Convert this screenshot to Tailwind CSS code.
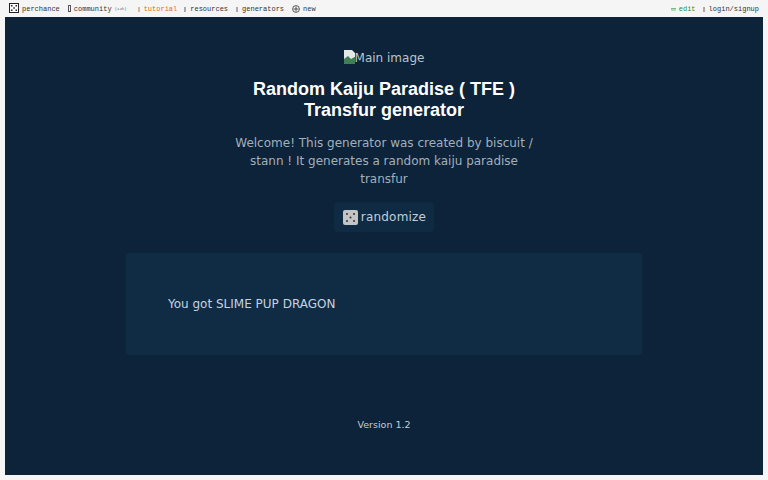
<!DOCTYPE html>
<html lang="en">
<head>
    <meta charset="UTF-8">
    <meta name="viewport" content="width=device-width, initial-scale=1.0">
    <title>Random Kaiju Paradise ( TFE ) Transfur generator</title>
    <script src="https://cdn.jsdelivr.net/npm/@tailwindcss/browser@4"></script>
</head>
<body class="bg-[#f5f5f5] h-[480px] w-[768px] overflow-hidden flex flex-col">
    <nav class="h-[17px] pt-[1px] flex items-center justify-between pl-[9px] pr-[9px] font-['Liberation_Mono',monospace] text-[7px] text-[#333]">
        <div class="flex items-center">
            <span class="flex items-center gap-[3px] mr-[8px]">
                <svg width="10" height="10" viewBox="0 0 10 10" class="mb-[2px]"><rect x="0.5" y="0.5" width="9" height="9" fill="#fff" stroke="#222"/><rect x="2" y="2" width="1.5" height="1.5" fill="#222"/><rect x="6.5" y="2" width="1.5" height="1.5" fill="#222"/><rect x="4.25" y="4.25" width="1.5" height="1.5" fill="#222"/><rect x="2" y="6.5" width="1.5" height="1.5" fill="#222"/><rect x="6.5" y="6.5" width="1.5" height="1.5" fill="#222"/></svg>
                perchance
            </span>
            <span class="flex items-center gap-[3px] mr-[11px]">
                <span class="w-[3px] h-[7px] border border-[#555] mb-[2px]"></span>
                community <span class="text-[4px] text-[#666]">(14h)</span>
            </span>
            <span class="flex items-center gap-[4px] mr-[7px] text-[#e07020]">
                <span class="w-[2px] h-[5px] border border-[#d9b89a]"></span>
                tutorial
            </span>
            <span class="flex items-center gap-[4px] mr-[8px]">
                <span class="w-[2px] h-[5px] border border-[#aaa]"></span>
                resources
            </span>
            <span class="flex items-center gap-[4px] mr-[8px]">
                <span class="w-[2px] h-[5px] border border-[#aaa]"></span>
                generators
            </span>
            <span class="flex items-center gap-[3px]">
                <svg width="8" height="8" viewBox="0 0 8 8" fill="none" stroke="#333" stroke-width="0.8"><circle cx="4" cy="4" r="3.4"/><path d="M4 1.5v5M1.5 4h5"/></svg>
                new
            </span>
        </div>
        <div class="flex items-center">
            <span class="flex items-center gap-[2px] mr-[7px] text-[#2e8b2e]">
                <svg width="6" height="6" viewBox="0 0 6 6" fill="none" stroke="#7cb87c"><path d="M0 2.5h5M0 4h5"/></svg>
                edit
            </span>
            <span class="flex items-center gap-[4px]">
                <span class="w-[2px] h-[5px] border border-[#aaa]"></span>
                login/signup
            </span>
        </div>
    </nav>

    <main class="mx-[5px] h-[458px] bg-[#0c2339] flex flex-col items-center font-['DejaVu_Sans',sans-serif]">
        <div class="mt-[32px] h-[18px] flex items-center text-[12px] text-[#b9c4cf]">
            <svg width="11" height="14" viewBox="0 0 11 14" class="mb-[3px]"><path d="M0 0h8l3 3v4l-11 7z" fill="#e4e8e6"/><path d="M0 14v-5l4-3 3 3 4-2v7z" fill="#3f7f55"/></svg>
            <span>Main image</span>
        </div>
        <h1 class="mt-[12px] text-center font-['Liberation_Sans',sans-serif] font-bold text-[18px] leading-[21px] text-white">Random Kaiju Paradise ( TFE )<br>Transfur generator</h1>
        <p class="mt-[13px] w-[300px] text-center text-[12px] leading-[18px] text-[#a3afbb]">Welcome! This generator was created by biscuit / stann ! It generates a random kaiju paradise transfur</p>
        <button class="mt-[14px] w-[100px] h-[30px] pl-[1px] rounded-[3px] bg-[#0f2b44] flex items-center justify-center gap-[3px] text-[12px] tracking-[0.2px] text-[#c3cdd6]">
            <svg width="15" height="15" viewBox="0 0 15 15"><rect width="15" height="15" rx="2" fill="#c4c4c4"/><circle cx="4" cy="4" r="1" fill="#333"/><circle cx="11" cy="4" r="1" fill="#333"/><circle cx="7.5" cy="7.5" r="1" fill="#333"/><circle cx="4" cy="11" r="1" fill="#333"/><circle cx="11" cy="11" r="1" fill="#333"/></svg>
            randomize
        </button>
        <div class="mt-[21px] w-[516px] h-[102px] rounded-[2px] bg-[#102b44] flex items-center pl-[42px] text-[12px] text-[#c3d3e0]">You got SLIME PUP DRAGON</div>
        <p class="mt-[64px] text-[9.5px] leading-[12px] text-[#c3cdd6]">Version 1.2</p>
    </main>
</body>
</html>
